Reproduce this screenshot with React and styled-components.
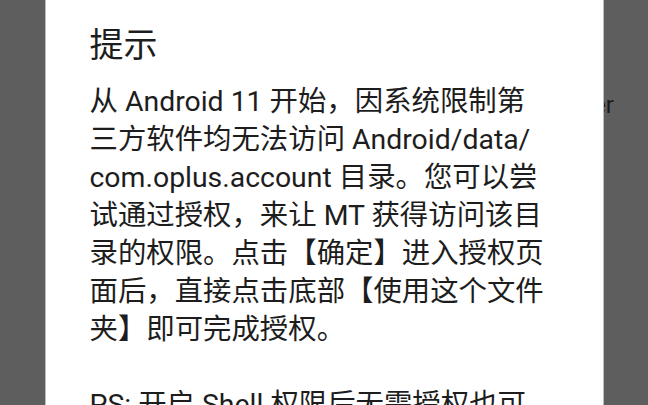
import React from 'react';
import styled, { createGlobalStyle } from 'styled-components';

const GlobalStyle = createGlobalStyle`
  html, body {
    margin: 0;
    padding: 0;
    background: #5e5e5e;
  }
  * {
    box-sizing: border-box;
  }
`;

const Screen = styled.div`
  display: grid;
  width: 648px;
  height: 405px;
  overflow: hidden;
  background-color: #5e5e5e;
  font-family: Roboto, "Noto Sans CJK SC", sans-serif;
`;

const Backdrop = styled.div`
  grid-area: 1 / 1;
  display: flex;
  justify-content: flex-end;
  align-items: flex-start;
  padding: 89px 34px 0 0;
`;

const BackdropLabel = styled.span`
  font-size: 24px;
  line-height: 32px;
  color: #1c1c1c;
`;

const Dialog = styled.div`
  grid-area: 1 / 1;
  justify-self: center;
  width: 557px;
  background-color: #ffffff;
  padding: 25px 57px 0 44px;
  box-shadow: 0 0 0 1px #bdbdbd;
  color: #1d1d1d;
`;

const DialogTitle = styled.h2`
  margin: 0 0 18px;
  font-size: 34px;
  line-height: 40px;
  font-weight: 400;
`;

const DialogText = styled.p`
  margin: 0 0 ${(p) => (p.$gap ? '37px' : '0')};
  font-size: 28.4px;
  line-height: 38px;
`;

export default function App() {
  return (
    <Screen>
      <GlobalStyle />
      <Backdrop>
        <BackdropLabel>Folder</BackdropLabel>
      </Backdrop>
      <Dialog>
        <DialogTitle>提示</DialogTitle>
        <DialogText $gap>
          从 Android 11 开始，因系统限制第三方软件均无法访问 Android/data/<wbr />com.oplus.account
          目录。您可以尝试通过授权，来让 MT 获得访问该目录的权限。点击【确定】进入授权页面后，直接点击底部【使用这个文件夹】即可完成授权。
        </DialogText>
        <DialogText>PS: 开启 Shell 权限后无需授权也可</DialogText>
      </Dialog>
    </Screen>
  );
}
